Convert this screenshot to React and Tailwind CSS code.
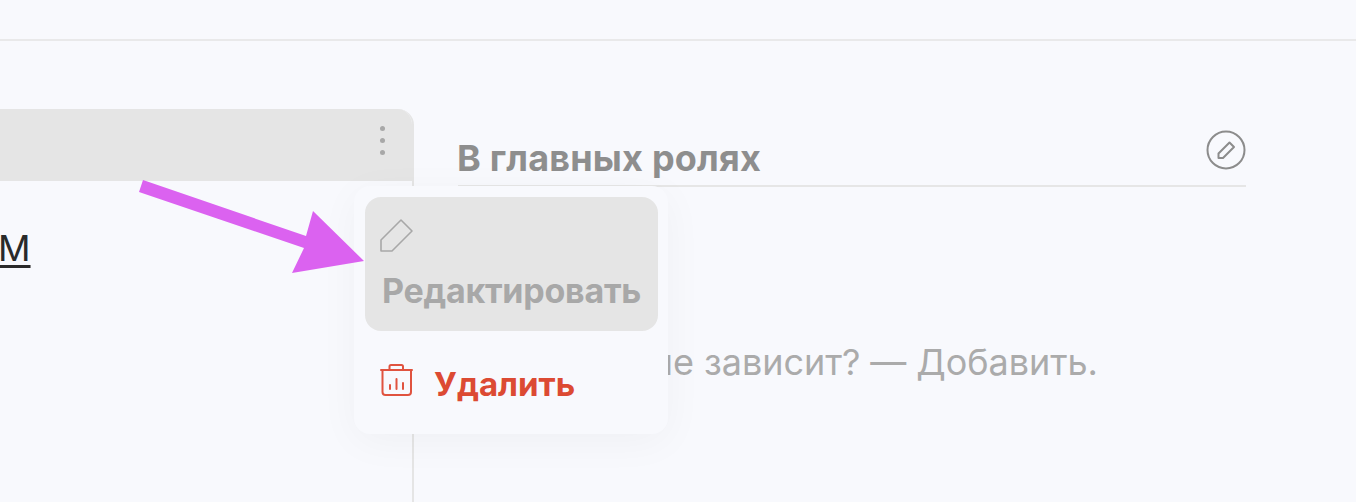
import React from 'react';

const PencilIcon = () => (
  <svg width="36" height="36" viewBox="0 0 36 36" fill="none" stroke="#a8a8a8" strokeWidth="1.6" strokeLinejoin="round">
    <path d="M1 22 L21 2 L32 13 L12 33 L1 33 Z" />
  </svg>
);

const TrashIcon = () => (
  <svg className="mt-[3px]" width="34" height="34" viewBox="0 0 34 34" fill="none" stroke="#e0533f" strokeWidth="2" strokeLinecap="round" strokeLinejoin="round">
    <path d="M1 8 H32" />
    <path d="M9.5 8 V4.5 Q9.5 3 11 3 H21.5 Q23 3 23 4.5 V8" />
    <path d="M2.5 8 V30 Q2.5 33 5.5 33 H28 Q31 33 31 30 V8" />
    <path d="M10 23 V27 M16.5 17 V27 M23 21 V27" />
  </svg>
);

const EditCircle = () => (
  <svg width="40" height="40" viewBox="0 0 40 40" fill="none" stroke="#8c8c8c" strokeWidth="2" strokeLinejoin="round">
    <circle cx="20" cy="20" r="18.5" />
    <path d="M12.5 23.5 L23.5 12.5 L28 17 L17 28 L12.5 28 Z" />
  </svg>
);

const Arrow = () => (
  <svg className="absolute left-0 top-0 pointer-events-none" width="1356" height="502" viewBox="0 0 1356 502">
    <path
      fill="#db62f0"
      d="M143 180 L139 192 L304 248 L292 273 L364 261 L313 211 L306 236 Z"
    />
  </svg>
);

export default function App() {
  return (
    <div className="relative w-[1356px] h-[502px] overflow-hidden bg-[#f8f9fd] font-['Inter',sans-serif]">
      <div className="h-[41px] border-b-2 border-[#e9e9ea]" />

      <div className="flex h-[461px]">
        <div className="w-[414px] shrink-0 pt-[68px]">
          <div className="h-full border-r-2 border-[#e5e5e5] rounded-tr-2xl overflow-hidden">
            <div className="h-[72px] bg-[#e5e5e5] flex justify-end items-center pr-[27px]">
              <div className="flex flex-col gap-[7px] mb-[10px]">
                <span className="w-[5px] h-[5px] rounded-full bg-[#a8a8a8]" />
                <span className="w-[5px] h-[5px] rounded-full bg-[#a8a8a8]" />
                <span className="w-[5px] h-[5px] rounded-full bg-[#a8a8a8]" />
              </div>
            </div>
            <div className="mt-[43px] ml-[-2px] text-[36px] leading-[48px] text-[#2a2a2a] underline underline-offset-4 decoration-[3px]">
              М
            </div>
          </div>
        </div>

        <div className="flex-1 pl-[44px] pr-[110px] pt-[88px]">
          <div className="flex items-center justify-between h-[58px] border-b-2 border-[#e6e6e6] relative">
            <span className="text-[36px] leading-[48px] font-bold tracking-[0.2px] text-[#8e8e8e] mt-[1px] ml-[-1px]">В главных ролях</span>
            <span className="mb-[14px]">
              <EditCircle />
            </span>
          </div>
          <div className="mt-[153px] text-[36px] leading-[44px] tracking-[-0.06px] text-[#ababab] whitespace-nowrap">
            От кого он не зависит? — Добавить.
          </div>
        </div>
      </div>

      {/* popup menu */}
      <div className="absolute left-[354px] top-[186px] w-[314px] h-[248px] rounded-2xl bg-[#f8f9fd] shadow-[0_8px_40px_rgba(0,0,0,0.04)] p-[11px] pr-[10px]">
        <div className="h-[134px] rounded-2xl bg-[#e5e5e5] pl-[15px] pt-[21px]">
          <PencilIcon />
          <div className="mt-[15px] pl-[2px] text-[34px] leading-[44px] font-bold tracking-[-0.25px] text-[#a8a8a8] whitespace-nowrap">Редактировать</div>
        </div>
        <div className="flex items-start gap-[20px] pl-[15px] mt-[28px]">
          <TrashIcon />
          <span className="text-[33px] leading-[44px] font-bold text-[#dc4a33] mt-[3px]">Удалить</span>
        </div>
      </div>

      <Arrow />
    </div>
  );
}
